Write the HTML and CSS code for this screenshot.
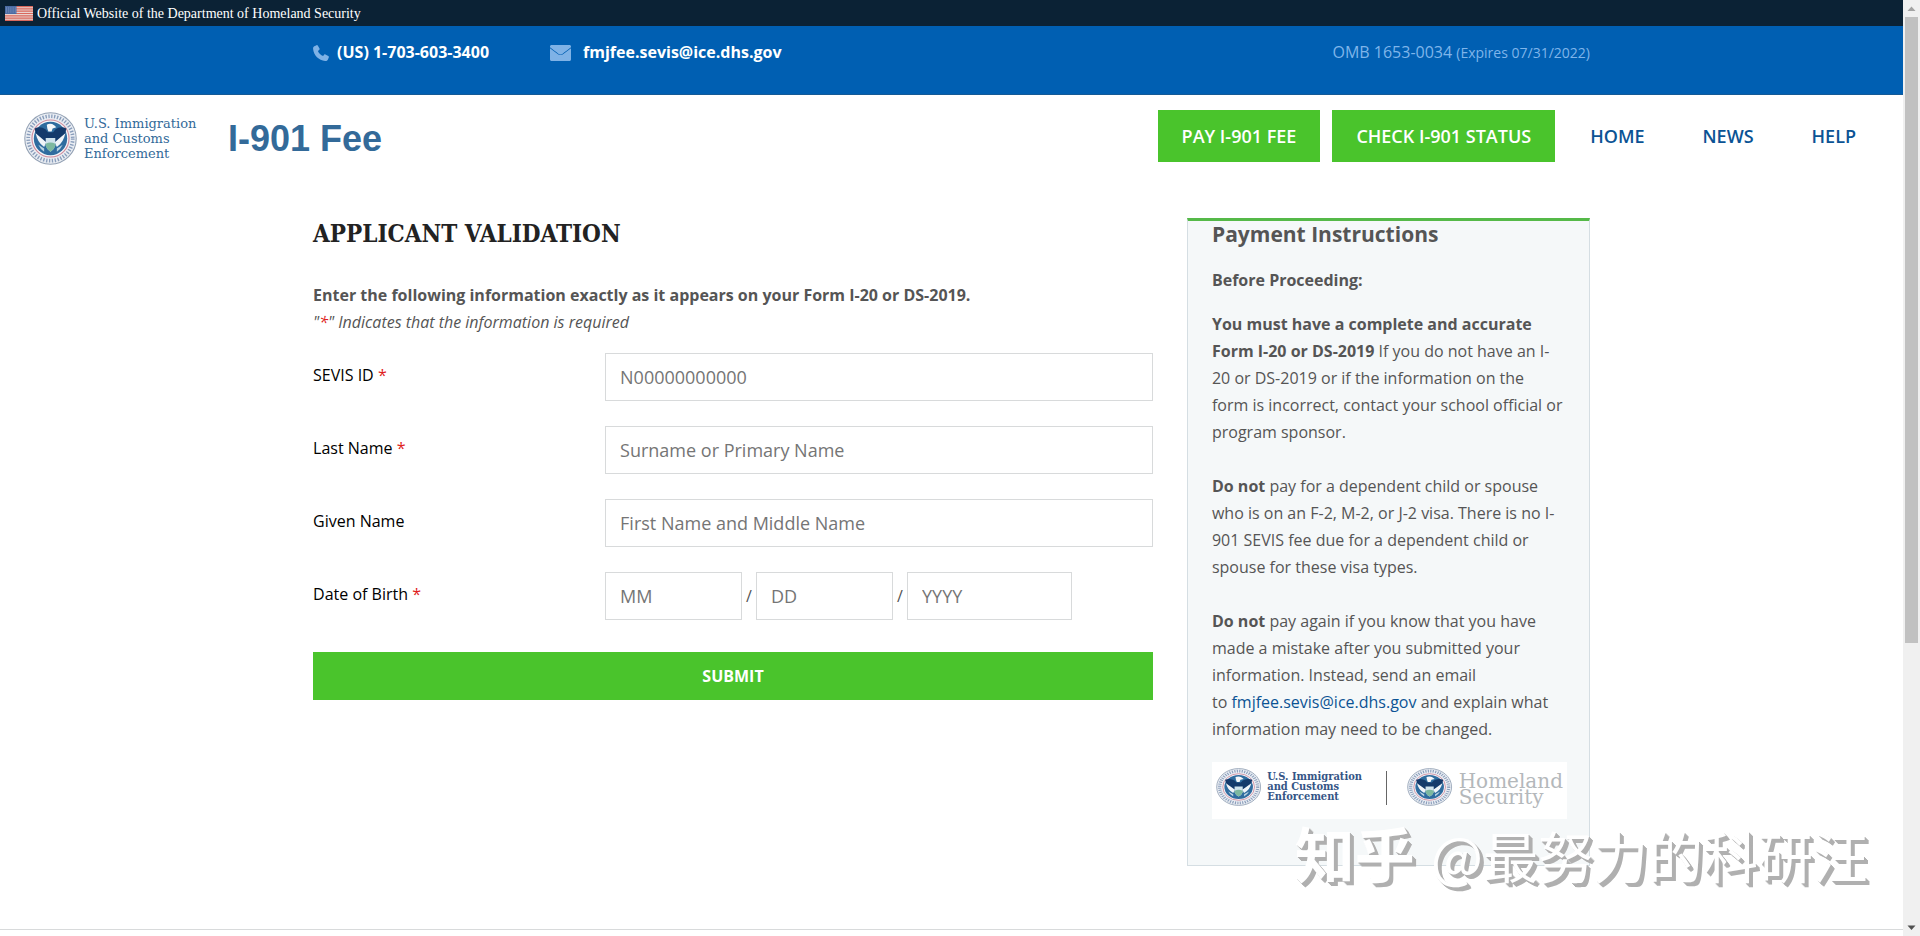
FILE: index.html
```html
<!DOCTYPE html>
<html lang="en">
<head>
  <meta charset="UTF-8" />
  <meta name="viewport" content="width=device-width, initial-scale=1.0"/>
  <title>I-901 Fee - Applicant Validation</title>
  <link rel="stylesheet" href="styles.css">
</head>
<body>
  <!-- DHS seal, shared by all logos -->
  <svg class="defs" width="0" height="0" aria-hidden="true">
    <symbol id="seal" viewBox="0 0 100 100" preserveAspectRatio="none">
      <circle cx="50" cy="50" r="48.500" fill="#e9edf3" stroke="#93a1b4" stroke-width="2"/>
      <circle cx="50" cy="50" r="42" fill="none" stroke="#5f7ba3" stroke-width="7" stroke-dasharray="2.500 3" opacity=".7"/>
      <circle cx="50" cy="50" r="35" fill="#f3f4f8" stroke="#d08a9b" stroke-width="2"/>
      <circle cx="50" cy="50" r="31.500" fill="#2f6c9f"/>
      <path d="M20 31 Q31 26 41 33 L45 38 H55 L59 33 Q69 26 80 31 L76 47 L62 58 L50 52 L38 58 L24 47Z" fill="#143a6b"/>
      <path d="M22 40 L42 57 L38 66 Q25 57 22 40Z M78 40 L58 57 L62 66 Q75 57 78 40Z" fill="#f0f4f8"/>
      <path d="M27 62 L38 69 L38 75 Q31 71 27 62Z M73 62 L62 69 L62 75 Q69 71 73 62Z" fill="#b9d2e2"/>
      <path d="M43 24 Q50 20 57 25 L61 29 L54 31 L52 37 H46 L44 31Z" fill="#f4f7fa"/>
      <path d="M41 49 H59 V63 Q57 71 50 75 Q43 71 41 63Z" fill="#cfe2ec"/>
      <path d="M41 60 Q50 55 59 60 V64 Q57 71 50 75 Q43 71 41 64Z" fill="#7db89f"/>
    </symbol>
  </svg>

  <div class="page">
    <div class="gov-banner">
      <svg class="flag" viewBox="0 0 28 15" aria-hidden="true">
        <path fill="#e9d3cf" d="M0 0h28v15H0z"/>
        <path stroke="#d9685c" stroke-width="1.200" d="M0 .6h28M0 2.900h28M0 5.200h28M0 7.500h28M0 9.800h28M0 12.100h28M0 14.400h28"/>
        <path fill="#4a6ba3" d="M0 0h11.500v8H0z"/>
        <path stroke="#9fb3d3" stroke-width=".7" stroke-dasharray="1 1.200" d="M1 2h10M1 4h10M1 6h10"/>
      </svg>
      <span>Official Website of the Department of Homeland Security</span>
    </div>

    <div class="contact-bar">
      <div class="container contact-row">
        <a class="contact phone" href="tel:17036033400">
          <svg width="16" height="16" viewBox="0 0 16 16" aria-hidden="true"><path d="M3.600.2 1.300 1.200C.4 1.600 0 2.700.1 3.900.7 10.200 5.800 15.300 12.100 15.900c1.200.1 2.300-.3 2.700-1.200l1-2.300c.2-.5 0-1-.5-1.300l-2.900-1.600c-.5-.3-1-.1-1.300.3l-1 1.300C7.800 10.100 5.900 8.200 4.900 5.900l1.300-1c.4-.3.6-.8.3-1.300L4.900.7C4.600.2 4.100 0 3.600.2z"/></svg>
          (US) 1-703-603-3400
        </a>
        <a class="contact mail" href="mailto:fmjfee.sevis@ice.dhs.gov">
          <svg width="21" height="16" viewBox="0 0 21 16" aria-hidden="true"><path d="M1.500 0h18c.8 0 1.500.6 1.500 1.500v.8c-3 2.600-6 4.600-8.700 6.600-1.200.9-2.400.9-3.600 0C6 6.900 3 4.900 0 2.300v-.8C0 .6.700 0 1.500 0zM0 3.300c2.600 2 5.300 3.900 8 5.900 1.700 1.200 3.300 1.200 5 0 2.700-2 5.400-3.900 8-5.900v11.200c0 .9-.7 1.500-1.500 1.500h-18C.7 16 0 15.400 0 14.500z"/></svg>
          fmjfee.sevis@ice.dhs.gov
        </a>
        <span class="omb">OMB 1653-0034 <small>(Expires 07/31/2022)</small></span>
      </div>
    </div>

    <header class="site-header">
      <a class="brand" href="#">
        <svg class="brand-seal" aria-hidden="true"><use href="#seal"/></svg>
        <span class="brand-name">U.S. Immigration<br>and Customs<br>Enforcement</span>
        <span class="brand-title">I-901 Fee</span>
      </a>
      <nav class="main-nav">
        <a class="nav-button" href="#">PAY I-901 FEE</a>
        <a class="nav-button" href="#">CHECK I-901 STATUS</a>
        <a class="nav-link" href="#">HOME</a>
        <a class="nav-link" href="#">NEWS</a>
        <a class="nav-link" href="#">HELP</a>
      </nav>
    </header>

    <main class="container content">
      <form class="validation">
        <h1>APPLICANT VALIDATION</h1>
        <p class="intro"><strong>Enter the following information exactly as it appears on your Form I-20 or DS-2019.</strong><br>
        <em>"<span class="required">*</span>" Indicates that the information is required</em></p>

        <div class="field">
          <label for="sevis">SEVIS ID <span class="required">*</span></label>
          <input type="text" id="sevis" placeholder="N00000000000">
        </div>
        <div class="field">
          <label for="last">Last Name <span class="required">*</span></label>
          <input type="text" id="last" placeholder="Surname or Primary Name">
        </div>
        <div class="field">
          <label for="given">Given Name</label>
          <input type="text" id="given" placeholder="First Name and Middle Name">
        </div>
        <div class="field">
          <label for="month">Date of Birth <span class="required">*</span></label>
          <div class="date">
            <input type="text" id="month" placeholder="MM">
            <span>/</span>
            <input type="text" aria-label="Day of birth" placeholder="DD">
            <span>/</span>
            <input type="text" class="year" aria-label="Year of birth" placeholder="YYYY">
          </div>
        </div>
        <button type="submit">SUBMIT</button>
      </form>

      <aside class="instructions">
        <h2>Payment Instructions</h2>
        <h3>Before Proceeding:</h3>
        <p><strong>You must have a complete and accurate Form I-20 or DS-2019</strong> If you do not have an I-20 or DS-2019 or if the information on the form&nbsp;is incorrect, contact your school official or program sponsor.</p>
        <p><strong>Do not</strong> pay for a dependent child or spouse who is on an F-2, M-2, or J-2 visa. There is no I-901 SEVIS fee due for a dependent child or spouse for these visa types.</p>
        <p><strong>Do not</strong> pay again if you know that you have made a mistake after you submitted your information. Instead, send an email to&nbsp;<a href="mailto:fmjfee.sevis@ice.dhs.gov">fmjfee.sevis@ice.dhs.gov</a> and explain what information may need to be changed.</p>
        <div class="agencies">
          <svg class="agency-seal" aria-hidden="true"><use href="#seal"/></svg>
          <span class="agency-ice">U.S. Immigration<br>and Customs<br>Enforcement</span>
          <span class="divider"></span>
          <svg class="agency-seal" aria-hidden="true"><use href="#seal"/></svg>
          <span class="agency-dhs">Homeland<br>Security</span>
        </div>
      </aside>
    </main>

    <footer></footer>
  </div>

  <div class="scrollbar" aria-hidden="true">
    <svg viewBox="0 0 17 17"><path fill="#a3a3a3" d="M4.500 11 8.500 6.500 12.500 11z"/></svg>
    <div class="track"><div class="thumb"></div></div>
    <svg viewBox="0 0 17 17"><path fill="#505050" d="M4.500 6.500 8.500 11 12.500 6.500z"/></svg>
  </div>

  <div class="watermark"><b>知乎</b> @最努力的科研汪</div>
</body>
</html>
```
FILE: styles.css
```css
* {
  box-sizing: border-box;
}
body {
  margin: 0;
  display: flex;
  height: 100vh;
  overflow: hidden;
  font-family: "Open Sans", "Noto Sans", sans-serif;
  font-size: 16px;
  line-height: 27px;
  color: #555;
  background: #fff;
}
a {
  color: #0b5394;
  text-decoration: none;
}
strong {
  font-weight: 700;
}
.defs {
  position: absolute;
}
.page {
  flex: 1;
  display: flex;
  flex-direction: column;
}
.container {
  width: 67.1%;
  margin: 0 auto;
}

/* top bars */
.gov-banner {
  display: flex;
  align-items: center;
  gap: 4px;
  height: 26px;
  padding-left: 5px;
  background: #0b2235;
  color: #fff;
  font-family: "Liberation Serif", serif;
  font-size: 14px;
}
.flag {
  width: 28px;
  height: 15px;
}
.contact-bar {
  height: 69px;
  padding-top: 13px;
  background: #005fb2;
  border-bottom: 1px solid #155a96;
}
.contact-row {
  display: flex;
  align-items: center;
}
.contact {
  display: flex;
  align-items: center;
  color: #fff;
  font-weight: 700;
}
.contact svg {
  fill: #7fb2e6;
}
.phone {
  gap: 8px;
}
.mail {
  gap: 12px;
  margin-left: 61px;
}
.omb {
  margin-left: auto;
  color: #7fb5ea;
}
.omb small {
  font-size: 14px;
}

/* header */
.site-header {
  display: flex;
  justify-content: space-between;
  align-items: flex-start;
  padding: 15px 24px 0;
}
.brand {
  display: flex;
  align-items: center;
  height: 56px;
  color: #336a99;
}
.brand-seal {
  width: 53px;
  height: 53px;
}
.brand-name {
  margin-left: 7px;
  width: 144px;
  font-family: "DejaVu Serif", serif;
  font-size: 13px;
  line-height: 15px;
  white-space: nowrap;
}
.brand-title {
  font-family: "Liberation Sans", sans-serif;
  font-weight: 700;
  font-size: 36px;
}
.main-nav {
  display: flex;
  gap: 12px;
  font-size: 18px;
  font-weight: 600;
  line-height: 52px;
}
.nav-button {
  padding: 0 24px;
  background: #4ac42c;
  color: #fff;
}
.nav-link {
  padding: 0 23px;
}

/* form */
.content {
  display: flex;
  align-items: flex-start;
  gap: 34px;
  padding-top: 52px;
}
.validation {
  flex: 1;
}
h1 {
  margin: 0 0 32px;
  font-family: "Roboto Slab", "DejaVu Serif Condensed", "DejaVu Serif", serif;
  font-size: 24px;
  font-weight: 700;
  line-height: 32px;
  color: #222;
}
.intro {
  margin: 0 0 17px;
}
.required {
  color: #e01b1b;
}
.field {
  display: flex;
  align-items: center;
  margin-bottom: 25px;
}
.field label {
  width: 292px;
  padding-bottom: 4px;
  color: #000;
}
input {
  flex: 1;
  min-width: 0;
  height: 48px;
  padding: 0 14px;
  border: 1px solid #d8dadb;
  background: #fff;
  font: inherit;
  font-size: 18px;
}
input::placeholder {
  color: #757575;
  opacity: 1;
}
.date {
  display: flex;
  align-items: center;
}
.date input {
  flex: none;
  width: 137px;
}
.date .year {
  width: 165px;
}
.date span {
  width: 14px;
  text-align: center;
}
button {
  width: 100%;
  height: 48px;
  margin-top: 7px;
  border: none;
  background: #4ac42c;
  color: #fff;
  font: inherit;
  font-weight: 700;
  cursor: pointer;
}

/* sidebar */
.instructions {
  width: 403px;
  padding: 0 22px 46px 24px;
  border: 1px solid #d5dee3;
  border-top: 3px solid #55b948;
  background: #f5f8f9;
}
h2 {
  margin: 0 0 19px;
  font-size: 21px;
  font-weight: 700;
}
h3 {
  margin: 0 0 17px;
  font-size: 16px;
  font-weight: 700;
}
.instructions p {
  margin: 0 0 27px;
}
.instructions p:last-of-type {
  margin-bottom: 19px;
}
.agencies {
  display: flex;
  height: 57px;
  padding: 6px 4px 0;
  background: #fff;
  font-family: "DejaVu Serif", serif;
  white-space: nowrap;
}
.agency-seal {
  width: 46px;
  height: 38px;
}
.agency-ice {
  margin: 4px 0 0 6px;
  width: 121px;
  font-family: "DejaVu Serif Condensed", "DejaVu Serif", serif;
  font-size: 11px;
  font-weight: 700;
  line-height: 10px;
  color: #355586;
}
.divider {
  width: 1px;
  height: 34px;
  margin: 3px 20px 0 0;
  background: #666;
}
.agency-dhs {
  margin: 5px 0 0 6px;
  font-size: 20px;
  line-height: 16px;
  color: #b4b8bb;
}
footer {
  height: 7px;
  margin-top: auto;
  border-top: 1px solid #d8dadb;
}

/* scrollbar */
.scrollbar {
  display: flex;
  flex-direction: column;
  width: 17px;
  background: #f0f0f0;
}
.scrollbar svg {
  width: 17px;
  height: 17px;
}
.track {
  flex: 1;
  padding: 0 2px;
}
.thumb {
  height: 69.4%;
  background: #c1c1c1;
}

.watermark {
  position: absolute;
  right: 52px;
  bottom: 46px;
  font-family: "Noto Sans CJK SC", sans-serif;
  font-size: 55px;
  line-height: 72px;
  color: #fff;
  text-shadow: 1px 1px 0 #b0b0b0, 2px 2px 0 #b0b0b0, 3px 3px 0 #b0b0b0, 4px 4px 0 #b0b0b0;
}
.watermark b {
  margin-right: 4px;
  font-size: 60px;
}
```
